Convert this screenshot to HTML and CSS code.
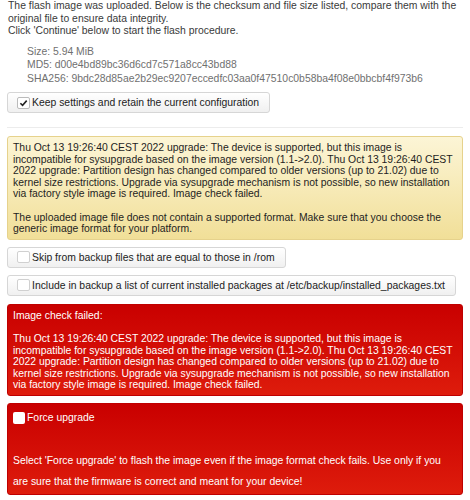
FILE: index.html
```html
<!DOCTYPE html>
<html>
<head>
<meta charset="utf-8">
<link rel="stylesheet" href="styles.css">
</head>
<body>
<div class="page">
  <p class="intro">The flash image was uploaded. Below is the checksum and file size listed, compare them with the original file to ensure data integrity.<br>Click 'Continue' below to start the flash procedure.</p>
  <ul class="sums">
    <li>Size: 5.94 MiB</li>
    <li>MD5: d00e4bd89bc36d6cd7c571a8cc43bd88</li>
    <li>SHA256: 9bdc28d85ae2b29ec9207eccedfc03aa0f47510c0b58ba4f08e0bbcbf4f973b6</li>
  </ul>
  <div class="opt"><label class="btn"><span class="cb checked"><svg viewBox="0 0 12 12" width="12" height="12"><path d="M2.6 6.2 L5 8.6 L9.5 3.4" fill="none" stroke="#222" stroke-width="1.7"/></svg></span>Keep settings and retain the current configuration</label></div>
  <hr class="sep">
  <div class="alert warn">
    <p>Thu Oct 13 19:26:40 CEST 2022 upgrade: The device is supported, but this image is incompatible for sysupgrade based on the image version (1.1-&gt;2.0). Thu Oct 13 19:26:40 CEST 2022 upgrade: Partition design has changed compared to older versions (up to 21.02) due to kernel size restrictions. Upgrade via sysupgrade mechanism is not possible, so new installation via factory style image is required. Image check failed.</p>
    <p>The uploaded image file does not contain a supported format. Make sure that you choose the generic image format for your platform.</p>
  </div>
  <div class="opt"><label class="btn"><span class="cb"></span>Skip from backup files that are equal to those in /rom</label></div>
  <div class="opt"><label class="btn"><span class="cb"></span>Include in backup a list of current installed packages at /etc/backup/installed_packages.txt</label></div>
  <div class="alert danger">
    <p>Image check failed:</p>
    <p>Thu Oct 13 19:26:40 CEST 2022 upgrade: The device is supported, but this image is incompatible for sysupgrade based on the image version (1.1-&gt;2.0). Thu Oct 13 19:26:40 CEST 2022 upgrade: Partition design has changed compared to older versions (up to 21.02) due to kernel size restrictions. Upgrade via sysupgrade mechanism is not possible, so new installation via factory style image is required. Image check failed.</p>
  </div>
  <div class="alert danger force">
    <label class="force-label"><span class="cb white"></span>Force upgrade</label>
    <p class="force-text">Select 'Force upgrade' to flash the image even if the image format check fails. Use only if you are sure that the firmware is correct and meant for your device!</p>
  </div>
</div>
</body>
</html>
```
FILE: styles.css
```css
html, body { margin: 0; padding: 0; background: #fff; }
body { font-family: "Liberation Sans", Arial, sans-serif; font-size: 10.4px; color: #3a3a3a; }
.page { padding: 0 7px 0 7px; }
p { margin: 0; }
.intro { padding-left: 1px; line-height: 12.5px; }
.sums { list-style: none; margin: 7px 0 0 0; padding: 0 0 0 20px; color: #707070; line-height: 13.5px; }
.opt { margin-top: 7px; display: flex; }
.btn { display: inline-flex; align-items: center; height: 19px; padding: 0 10px 0 9px; border: 1px solid #d6d6d6; border-radius: 3px; background: linear-gradient(#ffffff, #f0f0f0); color: #222; }
.cb { display: inline-flex; align-items: center; justify-content: center; width: 13px; height: 12px; border: 1px solid #d0d0d0; border-radius: 2px; background: #fff; margin-right: 2px; box-sizing: border-box; }
.cb.checked { border-color: #bbb; }
.sep { border: 0; border-top: 1px solid #ececec; margin: 14px 0 8px 0; }
.alert { border-radius: 3px; padding: 5px 5px 4px 5px; line-height: 11.6px; }
.alert p + p { margin-top: 11.6px; }
.warn { background: linear-gradient(#fcf5d6, #f1df98); border: 1px solid #e6d28c; color: #1e1e1e; }
.danger { background: linear-gradient(#c90000, #de1c0c); border: 1px solid #bf0000; color: #fff; margin-top: 8px; }
.force { margin-top: 7px; padding: 8px 5px 2px 5px; }
.force-label { display: flex; align-items: center; height: 12px; }
.cb.white { border: 0; width: 12px; height: 12px; }
.force-text { margin-top: 26px; line-height: 21px; }
```
